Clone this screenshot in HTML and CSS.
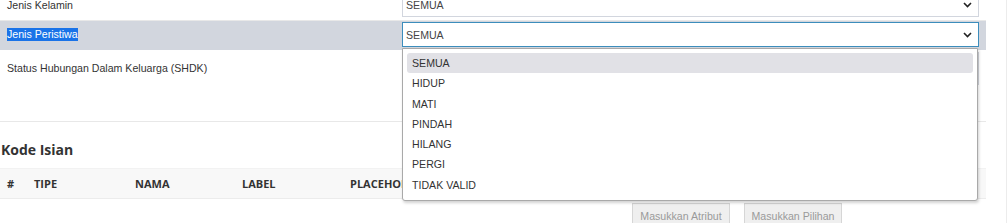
FILE: index.html
```html
<!DOCTYPE html>
<html>
<head>
<meta charset="utf-8">
<link rel="stylesheet" href="styles.css">
</head>
<body>
<div class="frame">
  <div class="page">
    <div class="form">
      <div class="row row-first">
        <div class="label">Jenis Kelamin</div>
        <div class="control">
          <div class="select">
            <span>SEMUA</span>
            <svg class="chev" width="9" height="6" viewBox="0 0 9 6"><path d="M1 1 L4.5 4.5 L8 1" fill="none" stroke="#222" stroke-width="1.6"/></svg>
          </div>
        </div>
      </div>
      <div class="row row-active">
        <div class="label"><span class="sel">Jenis Peristiwa</span></div>
        <div class="control">
          <div class="select focus">
            <span>SEMUA</span>
            <svg class="chev" width="9" height="6" viewBox="0 0 9 6"><path d="M1 1 L4.5 4.5 L8 1" fill="none" stroke="#222" stroke-width="1.6"/></svg>
          </div>
          <ul class="dropdown">
            <li class="hl">SEMUA</li>
            <li>HIDUP</li>
            <li>MATI</li>
            <li>PINDAH</li>
            <li>HILANG</li>
            <li>PERGI</li>
            <li>TIDAK VALID</li>
          </ul>
        </div>
      </div>
      <div class="row row-tall">
        <div class="label label-pad">Status Hubungan Dalam Keluarga (SHDK)</div>
        <div class="control">
          <div class="multi"></div>
        </div>
      </div>
    </div>

    <h3 class="title">Kode Isian</h3>
    <div class="thead">
      <div class="th c1">#</div>
      <div class="th c2">TIPE</div>
      <div class="th c3">NAMA</div>
      <div class="th c4">LABEL</div>
      <div class="th c5">PLACEHOLDER</div>
    </div>
    <div class="actions">
      <button class="btn">Masukkan Atribut</button>
      <button class="btn">Masukkan Pilihan</button>
    </div>
  </div>
</div>
</body>
</html>
```
FILE: styles.css
```css
html, body {
  margin: 0;
  padding: 0;
  background: #fff;
  overflow: hidden;
}
body {
  font-family: "Liberation Sans", Arial, sans-serif;
  font-size: 10.6px;
  color: #333;
}
.frame {
  width: 1006px;
  height: 223px;
  border-right: 1px solid #ececec;
  overflow: hidden;
}
.page {
  width: 986px;
  margin-top: -9px;
}
.form {
  display: flex;
  flex-direction: column;
}
.row {
  display: flex;
  border-bottom: 1px solid #e8e8e8;
  padding: 1px 0 3px 0;
}
.row-first {
  height: 25px;
}
.row-active {
  background: #d2d6de;
  height: 25px;
  border-bottom: none;
}
.row-tall {
  height: 67px;
  padding-top: 1px;
}
.label {
  width: 395px;
  padding-left: 7px;
  display: flex;
  align-items: center;
  height: 25px;
}
.label-pad {
  height: auto;
  align-items: flex-start;
  padding-top: 11px;
}
.sel {
  background: #1a73e8;
  color: #fff;
  line-height: 13px;
}
.control {
  width: 577px;
  position: relative;
}
.select {
  box-sizing: border-box;
  height: 25px;
  border: 1px solid #d2d6de;
  background: #fff;
  display: flex;
  align-items: center;
  justify-content: space-between;
  padding: 0 6px 0 3px;
  color: #444;
}
.select.focus {
  border-color: #3c8dbc;
}
.chev {
  display: block;
}
.multi {
  box-sizing: border-box;
  height: 33px;
  border: 1px solid #d2d6de;
  border-left: none;
  margin-top: 1px;
}
.dropdown {
  position: absolute;
  left: 0;
  top: 26px;
  width: 576px;
  box-sizing: border-box;
  margin: 0;
  padding: 4px 4px 5px 4px;
  list-style: none;
  background: #fff;
  border: 1px solid #a9a9a9;
  border-radius: 0 0 3px 3px;
  box-shadow: 1px 2px 3px rgba(0, 0, 0, 0.18);
  z-index: 5;
}
.dropdown li {
  height: 20.3px;
  line-height: 20px;
  padding-left: 5px;
  color: #333;
  border-radius: 3px;
}
.dropdown li.hl {
  background: #e1e1e6;
}
.title {
  margin: 0;
  padding: 0 0 0 1px;
  height: 20px;
  font-family: "Open Sans", sans-serif;
  font-weight: 700;
  font-size: 14px;
  line-height: 20px;
  color: #333;
  margin-top: 18px;
}
.thead {
  display: flex;
  align-items: center;
  height: 29px;
  background: #f8f8f8;
  border-top: 1px solid #f2f2f2;
  border-bottom: 1px solid #ececec;
  margin-top: 8px;
  font-family: "Open Sans", sans-serif;
  font-weight: 700;
  font-size: 11px;
  color: #333;
  overflow: hidden;
}
.th {
  white-space: nowrap;
}
.c1 { width: 27px; padding-left: 7px; }
.c2 { width: 101px; }
.c3 { width: 107px; }
.c4 { width: 108px; }
.c5 { width: 100px; }
.actions {
  display: flex;
  gap: 14px;
  padding: 4px 0 0 632px;
}
.btn {
  box-sizing: border-box;
  height: 26px;
  padding: 0 5px;
  border: 1px solid #d6d6d6;
  background: #efefef;
  color: #9a9a9a;
  font-family: "Liberation Sans", Arial, sans-serif;
  font-size: 10.6px;
  border-radius: 0;
  width: 98px;
}
```
